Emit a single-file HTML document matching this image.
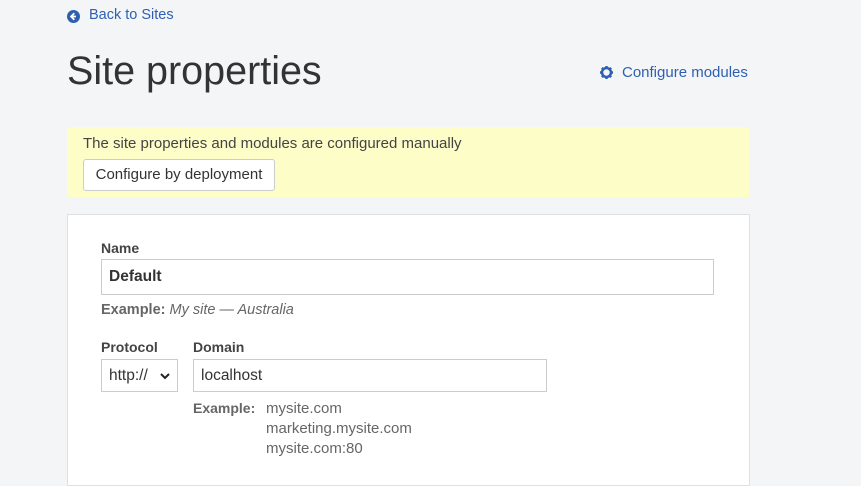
<!DOCTYPE html>
<html><head><style>
body{margin:0;width:861px;height:477px;background:#f4f5f7;font-family:"Liberation Sans",sans-serif;color:#333;overflow:hidden;position:relative}
.a{position:absolute}
.link{color:#2f5fb0;font-size:14.5px}
.lbl{font-weight:bold;font-size:14px;color:#444}
.muted{color:#666;font-size:14.5px}
.inp{position:absolute;background:#fff;border:1px solid #ccc;box-sizing:border-box;font-size:15.5px;padding-left:7px}
</style></head><body>
<svg class="a" style="left:67px;top:10px" width="13" height="13" viewBox="0 0 16 16"><circle cx="8" cy="8" r="8" fill="#2f5fb0"/><path d="M9 4L5 8l4 4M5 8h6" stroke="#fff" stroke-width="2.2" fill="none"/></svg>
<div class="a link" style="left:89px;top:7px">Back to Sites</div>
<div class="a" style="left:67px;top:49px;font-size:39.5px;color:#333">Site properties</div>
<svg class="a" style="left:600px;top:66px" width="13" height="13" viewBox="0 0 16 16"><circle cx="8" cy="8" r="5.5" fill="none" stroke="#2f5fb0" stroke-width="3"/><g stroke="#2f5fb0" stroke-width="3"><path d="M8 0v3M8 13v3M0 8h3M13 8h3M2.3 2.3l2.1 2.1M11.6 11.6l2.1 2.1M2.3 13.7l2.1-2.1M11.6 4.4l2.1-2.1"/></g></svg>
<div class="a link" style="left:622px;top:64px;font-size:15px">Configure modules</div>
<div class="a" style="left:67px;top:127px;width:682px;height:70px;background:#fdfdc8"></div>
<div class="a" style="left:83px;top:135px;font-size:15px;color:#444">The site properties and modules are configured manually</div>
<div class="a" style="left:83px;top:159px;width:192px;height:32px;box-sizing:border-box;background:#fff;border:1px solid #ccc;border-radius:3px;font-size:15px;line-height:30px;text-align:center;color:#333">Configure by deployment</div>
<div class="a" style="left:67px;top:214px;width:681px;height:270px;background:#fff;border:1px solid #e0e0e0"></div>
<div class="a lbl" style="left:101px;top:240px">Name</div>
<div class="inp" style="left:101px;top:259px;width:613px;height:36px;line-height:34px;font-weight:bold">Default</div>
<div class="a muted" style="left:101px;top:302px"><b>Example:</b> <i>My site — Australia</i></div>
<div class="a lbl" style="left:101px;top:339px">Protocol</div>
<div class="inp" style="left:101px;top:359px;width:77px;height:33px;line-height:31px">http://<svg style="position:absolute;right:7px;top:12px" width="10" height="8" viewBox="0 0 10 8"><path d="M1 2l4 4 4-4" stroke="#222" stroke-width="2" fill="none"/></svg></div>
<div class="a lbl" style="left:193px;top:339px">Domain</div>
<div class="inp" style="left:193px;top:359px;width:354px;height:33px;line-height:31px">localhost</div>
<div class="a muted" style="left:193px;top:400px;font-weight:bold;font-size:14px">Example:</div>
<div class="a muted" style="left:266px;top:399px;line-height:20px;font-size:15px">mysite.com<br>marketing.mysite.com<br>mysite.com:80</div>
</body></html>
